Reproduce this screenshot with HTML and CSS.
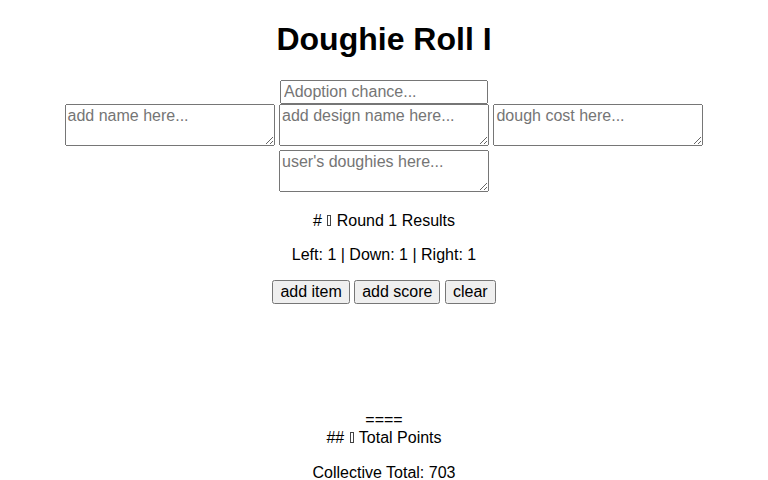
FILE: index.html
```html
<!DOCTYPE html>
<html lang="en">
  <head>
    <meta charset="UTF-8" />
    <meta name="viewport" content="width=device-width, initial-scale=1.0" />
    <title>Doughie Roll I</title>
    <link rel="stylesheet" href="styles.css">
  </head>
  <body>
    <h1 class="title">Doughie Roll I</h1>

    <div class="entry-form">
      <input id="adoption" class="field-input" type="text" placeholder="Adoption chance..." />
      <br />
      <textarea id="name" class="field" rows="2" placeholder="add name here..."></textarea>
      <textarea id="design" class="field" rows="2" placeholder="add design name here..."></textarea>
      <textarea id="cost" class="field" rows="2" placeholder="dough cost here..."></textarea>
      <br />
      <textarea id="doughies" class="field" rows="2" placeholder="user's doughies here..."></textarea>
    </div>

    <p class="round-title"># <span class="glyph-missing"></span> Round 1 Results</p>
    <p id="round-counts" class="round-counts">Left: 1 | Down: 1 | Right: 1</p>

    <div class="actions">
      <button id="add-item">add item</button>
      <button id="add-score">add score</button>
      <button id="clear">clear</button>
    </div>

    <p class="totals-heading">====<br />## <span class="glyph-missing"></span> Total Points</p>
    <p id="collective" class="collective">Collective Total: 703</p>
  </body>
</html>
```

FILE: styles.css
```css
body {
  font-family: "Liberation Sans", Arial, sans-serif;
  font-size: 16px;
  color: #000;
  background-color: #fff;
  margin: 8px;
  text-align: center;
}
.title {
  font-size: 32px;
  margin: 13px 0 22px;
}
.field-input {
  font-family: "Liberation Sans", Arial, sans-serif;
  font-size: 16px;
  width: 208px;
  box-sizing: border-box;
}
.field {
  font-family: "Liberation Sans", Arial, sans-serif;
  font-size: 16px;
  width: 210px;
  box-sizing: border-box;
}
/* emoji with no font to draw it: the browser's empty box */
.glyph-missing {
  display: inline-block;
  width: 2px;
  height: 9px;
  margin: 0 1px;
  border: 1px solid #444;
}
.round-title {
  margin: 16px 0;
}
.round-counts {
  margin: 16px 0;
}
.actions {
  margin: 16px 0;
}
.actions button {
  font-family: "Liberation Sans", Arial, sans-serif;
  font-size: 16px;
}
.totals-heading {
  margin: 107px 0 17px;
}
.collective {
  margin: 17px 0 0;
}
```
